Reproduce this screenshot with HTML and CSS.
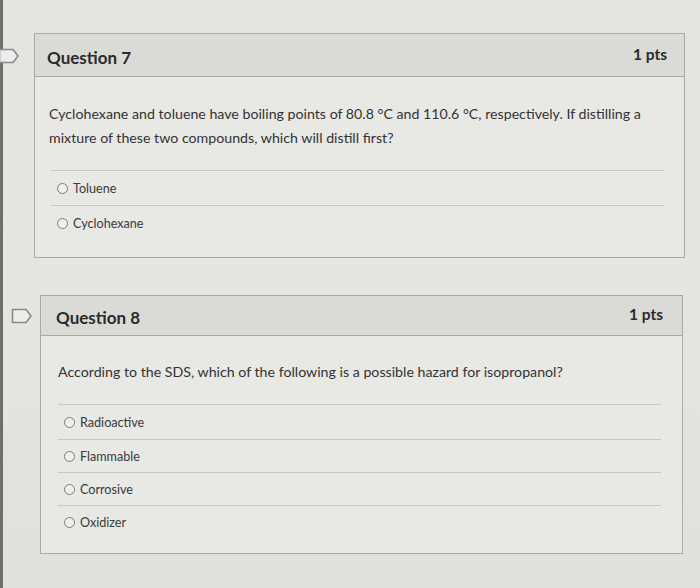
FILE: index.html
```html
<!DOCTYPE html>
<html>
<head>
<meta charset="utf-8">
<link rel="stylesheet" href="styles.css">
</head>
<body>
<div class="page">
  <div class="card q7">
    <svg class="flag" width="22" height="16" viewBox="0 0 22 16"><path d="M1.5 1.5 H15 L20 8 L15 14.5 H1.5 Z" fill="#ececea" stroke="#8a8a8a" stroke-width="1.6" stroke-linejoin="round"/></svg>
    <div class="head">
      <span class="title">Question 7</span>
      <span class="pts">1 pts</span>
    </div>
    <div class="body">
      <p class="text">Cyclohexane and toluene have boiling points of 80.8 °C and 110.6 °C, respectively. If distilling a mixture of these two compounds, which will distill ﬁrst?</p>
      <ul class="answers">
        <li><span class="radio"></span>Toluene</li>
        <li><span class="radio"></span>Cyclohexane</li>
      </ul>
    </div>
  </div>
  <div class="card q8">
    <svg class="flag" width="22" height="16" viewBox="0 0 22 16"><path d="M1.5 1.5 H15 L20 8 L15 14.5 H1.5 Z" fill="#ececea" stroke="#8a8a8a" stroke-width="1.6" stroke-linejoin="round"/></svg>
    <div class="head">
      <span class="title">Question 8</span>
      <span class="pts">1 pts</span>
    </div>
    <div class="body">
      <p class="text">According to the SDS, which of the following is a possible hazard for isopropanol?</p>
      <ul class="answers">
        <li><span class="radio"></span>Radioactive</li>
        <li><span class="radio"></span>Flammable</li>
        <li><span class="radio"></span>Corrosive</li>
        <li><span class="radio"></span>Oxidizer</li>
      </ul>
    </div>
  </div>
</div>
</body>
</html>
```

FILE: styles.css
```css
html, body {
  margin: 0;
  padding: 0;
}
body {
  background: #e2e2de;
  font-family: Lato, "Liberation Sans", sans-serif;
  color: #2f2f2f;
  width: 700px;
  height: 588px;
  overflow: hidden;
}
.page {
  border-left: 3px solid #6e6e6c;
  height: 588px;
  box-sizing: border-box;
  padding-top: 33px;
  background: linear-gradient(180deg, #e3e3df 0%, #e5e5e1 50%, #e0e0dc 100%);
}
.card {
  position: relative;
  border: 1px solid #a9a9a6;
  background: #e8e8e4;
}
.q7 {
  margin-left: 31px;
  width: 649px;
}
.q8 {
  margin-left: 37px;
  margin-top: 37px;
  width: 641px;
}
.flag {
  position: absolute;
  display: block;
}
.q7 .flag {
  left: -37px;
  top: 14px;
}
.q8 .flag {
  left: -30px;
  top: 12px;
}
.head {
  display: flex;
  justify-content: space-between;
  align-items: center;
  background: #dadad6;
  border-bottom: 1px solid #a9a9a6;
}
.q7 .head {
  height: 42px;
  padding: 0 17px 0 12px;
}
.q8 .head {
  height: 39px;
  padding: 0 19px 0 15px;
}
.title {
  font-weight: 700;
  font-size: 17px;
  color: #2b2b2b;
}
.q7 .title { margin-top: 5px; }
.q8 .title { margin-top: 4px; }
.pts {
  font-weight: 700;
  font-size: 15.5px;
  color: #2b2b2b;
}
.q7 .pts { margin-top: -2px; }
.q8 .pts { margin-top: -4px; }
.text {
  margin: 0;
  font-size: 14.2px;
  line-height: 24px;
  color: #333;
}
.q7 .body {
  padding: 25px 20px 17px 14px;
}
.q8 .body {
  padding: 24px 21px 15px 17px;
}
.q7 .text { margin-bottom: 20px; }
.q8 .text { margin-bottom: 20px; }
.answers {
  list-style: none;
  margin: 0;
  padding: 0;
  border-top: 1px solid #c6c6c2;
}
.answers li {
  display: flex;
  align-items: center;
  font-size: 12.6px;
  color: #3a3a3a;
  border-bottom: 1px solid #c6c6c2;
}
.answers li:last-child {
  border-bottom: none;
}
.q7 .answers { margin-left: 2px; }
.q7 .answers li {
  height: 34px;
  padding-left: 6px;
}
.q8 .answers li {
  height: 32px;
  padding-left: 6px;
}
.q8 .answers li:first-child {
  height: 34px;
}
.radio {
  width: 9px;
  height: 9px;
  border: 1.3px solid #7a7a78;
  border-radius: 50%;
  background: #efefec;
  margin-right: 5px;
  flex: none;
}
```
